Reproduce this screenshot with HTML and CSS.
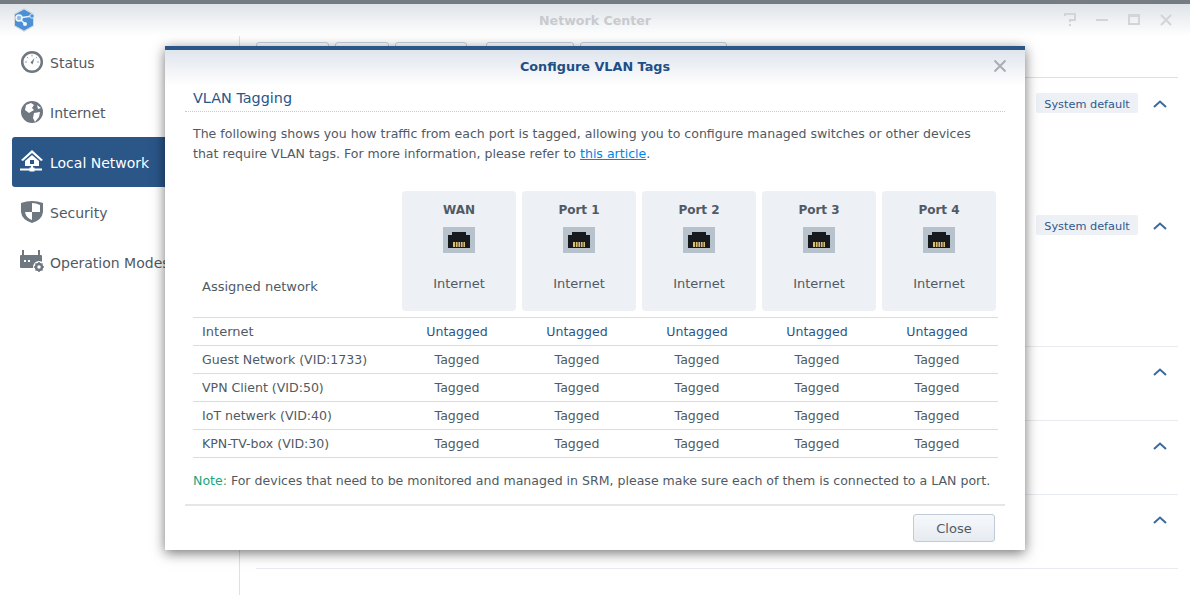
FILE: index.html
```html
<!DOCTYPE html>
<html lang="en">
<head>
<meta charset="utf-8">
<title>Network Center</title>
<link rel="stylesheet" href="styles.css">
</head>
<body>
<div class="app">
  <header class="titlebar">
    <svg class="app-logo" width="24" height="26" viewBox="0 0 24 26">
      <path d="M12 1 22 6.500V19L12 25 2 19V6.500Z" fill="#d5d9de"/>
      <path d="M12 2.500 21 7.500V18.500L12 23.500 3 18.500V7.500Z" fill="#4a90d6"/>
      <path d="M7 11 20 9M7 11 13 17" stroke="#e8f1fa" stroke-width="1.500" fill="none"/>
      <circle cx="7" cy="11" r="3" fill="#8fbde8" stroke="#f2f7fc" stroke-width="1.500"/>
      <circle cx="13" cy="17" r="2" fill="#f2f7fc"/>
      <circle cx="20" cy="9" r="2.200" fill="#4a90d6" stroke="#dbe9f7"/>
    </svg>
    <div class="window-title">Network Center</div>
    <div class="window-controls">
      <svg width="12" height="14" viewBox="0 0 12 14"><path d="M1 3V1H11V7H6V9M6 11V13" fill="none" stroke="#d2d4d7" stroke-width="2"/></svg>
      <svg width="12" height="14" viewBox="0 0 12 14"><path d="M0 7H12" stroke="#d2d4d7" stroke-width="2"/></svg>
      <svg width="12" height="14" viewBox="0 0 12 14"><rect x="1" y="2" width="10" height="9" fill="none" stroke="#d2d4d7" stroke-width="2"/><path d="M0 3H12" stroke="#d2d4d7" stroke-width="2"/></svg>
      <svg width="12" height="14" viewBox="0 0 12 14"><path d="M1 2 11 12M11 2 1 12" stroke="#d2d4d7" stroke-width="2"/></svg>
    </div>
  </header>
  <div class="workspace">
    <nav class="sidebar">
      <a class="nav-item">
        <svg class="nav-icon" width="24" height="24" viewBox="0 0 24 24"><circle cx="12" cy="12" r="9.800" fill="none" stroke="#6f7780" stroke-width="2.500"/><path d="M14.500 8 10.500 12.500 12.500 14.500Z" fill="#6f7780"/><path d="M12 4.500V6.500M5 12H7M17 12H19M7 7 8.200 8.200M17 7 15.800 8.200" stroke="#9aa0a6"/></svg>
        <span>Status</span>
      </a>
      <a class="nav-item">
        <svg class="nav-icon" width="24" height="24" viewBox="0 0 24 24"><circle cx="12" cy="12" r="11" fill="#6f7780"/><path d="M6 5 11 3 14 5 12 8 14 10 9 13 5 10ZM14 13 20 12 19 17 15 22 13 18ZM17 5 21 8 18 9Z" fill="#fff"/></svg>
        <span>Internet</span>
      </a>
      <a class="nav-item nav-item-active">
        <svg class="nav-icon" width="24" height="24" viewBox="0 0 24 24"><path d="M1 10 12 0 23 10 21 11 12 3 3 11Z" fill="#fff"/><path d="M5 11 12 5 19 11V16H5Z" fill="#fff"/><rect x="10" y="10" width="4" height="4" fill="#2a5688"/><path d="M0 19.500H10M14 19.500H22M12 16V18" stroke="#fff" stroke-width="2"/><rect x="9.500" y="17.500" width="5" height="4" fill="#fff"/></svg>
        <span>Local Network</span>
      </a>
      <a class="nav-item">
        <svg class="nav-icon" width="24" height="24" viewBox="0 0 24 24"><path d="M1 3Q12 -1 23 3V12Q22 20 12 23 2 20 1 12Z" fill="#6f7780"/><path d="M12 3Q16 3 20 5V12H12ZM12 12H5Q6 18 12 20Z" fill="#fff"/></svg>
        <span>Security</span>
      </a>
      <a class="nav-item">
        <svg class="nav-icon" width="24" height="24" viewBox="0 0 24 24"><path d="M3 0V5M19 0V5" stroke="#6f7780" stroke-width="2"/><rect y="5" width="22" height="13" rx="1" fill="#6f7780"/><path d="M4 11H6M8 11H10" stroke="#fff" stroke-width="2"/><circle cx="19" cy="17" r="6" fill="#fff"/><circle cx="19" cy="17" r="3" fill="none" stroke="#6f7780" stroke-width="2.500"/><path d="M19 12V22M14 17H24M15.500 13.500 22.500 20.500M22.500 13.500 15.500 20.500" stroke="#6f7780" stroke-width="1.500" stroke-dasharray="2 6"/></svg>
        <span>Operation Modes</span>
      </a>
    </nav>
    <main class="content">
      <div class="tabs">
        <span class="tab tab-a"></span><span class="tab tab-b"></span><span class="tab tab-c"></span><span class="tab tab-d"></span><span class="tab tab-e"></span>
      </div>
      <section class="panel panel-tall">
        <span class="badge">System default</span>
        <svg class="chevron" width="14" height="8" viewBox="0 0 14 8"><path d="M1 7 7 1.500 13 7" fill="none" stroke="#3b6a9c" stroke-width="2"/></svg>
      </section>
      <section class="panel panel-taller">
        <span class="badge">System default</span>
        <svg class="chevron" width="14" height="8" viewBox="0 0 14 8"><path d="M1 7 7 1.500 13 7" fill="none" stroke="#3b6a9c" stroke-width="2"/></svg>
      </section>
      <section class="panel panel-short">
        <svg class="chevron" width="14" height="8" viewBox="0 0 14 8"><path d="M1 7 7 1.500 13 7" fill="none" stroke="#3b6a9c" stroke-width="2"/></svg>
      </section>
      <section class="panel panel-short">
        <svg class="chevron" width="14" height="8" viewBox="0 0 14 8"><path d="M1 7 7 1.500 13 7" fill="none" stroke="#3b6a9c" stroke-width="2"/></svg>
      </section>
      <section class="panel panel-short">
        <svg class="chevron" width="14" height="8" viewBox="0 0 14 8"><path d="M1 7 7 1.500 13 7" fill="none" stroke="#3b6a9c" stroke-width="2"/></svg>
      </section>
    </main>
  </div>
</div>

<div class="dialog">
  <div class="dialog-head">
    <h1 class="dialog-title">Configure VLAN Tags</h1>
    <svg class="dialog-close" width="14" height="14" viewBox="0 0 14 14"><path d="M1.500 1.500 12.500 12.500M12.500 1.500 1.500 12.500" stroke="#a9adb2" stroke-width="2"/></svg>
  </div>
  <div class="dialog-body">
    <h2 class="section-title">VLAN Tagging</h2>
    <p class="intro">The following shows you how traffic from each port is tagged, allowing you to configure managed switches or other devices that require VLAN tags. For more information, please refer to <a class="link">this article</a>.</p>
    <div class="vlan">
      <div class="vlan-head">
        <div class="assigned">Assigned network</div>
        <div class="port"><b>WAN</b><svg class="jack" width="32" height="26" viewBox="0 0 32 26"><use href="#rj45"/></svg><span>Internet</span></div>
        <div class="port"><b>Port 1</b><svg class="jack" width="32" height="26" viewBox="0 0 32 26"><use href="#rj45"/></svg><span>Internet</span></div>
        <div class="port"><b>Port 2</b><svg class="jack" width="32" height="26" viewBox="0 0 32 26"><use href="#rj45"/></svg><span>Internet</span></div>
        <div class="port"><b>Port 3</b><svg class="jack" width="32" height="26" viewBox="0 0 32 26"><use href="#rj45"/></svg><span>Internet</span></div>
        <div class="port"><b>Port 4</b><svg class="jack" width="32" height="26" viewBox="0 0 32 26"><use href="#rj45"/></svg><span>Internet</span></div>
      </div>
      <div class="row row-first"><div>Internet</div><div class="un">Untagged</div><div class="un">Untagged</div><div class="un">Untagged</div><div class="un">Untagged</div><div class="un">Untagged</div></div>
      <div class="row"><div>Guest Network (VID:1733)</div><div>Tagged</div><div>Tagged</div><div>Tagged</div><div>Tagged</div><div>Tagged</div></div>
      <div class="row"><div>VPN Client (VID:50)</div><div>Tagged</div><div>Tagged</div><div>Tagged</div><div>Tagged</div><div>Tagged</div></div>
      <div class="row"><div>IoT netwerk (VID:40)</div><div>Tagged</div><div>Tagged</div><div>Tagged</div><div>Tagged</div><div>Tagged</div></div>
      <div class="row"><div>KPN-TV-box (VID:30)</div><div>Tagged</div><div>Tagged</div><div>Tagged</div><div>Tagged</div><div>Tagged</div></div>
    </div>
    <p class="note"><span class="note-label">Note:</span> For devices that need to be monitored and managed in SRM, please make sure each of them is connected to a LAN port.</p>
  </div>
  <div class="dialog-foot"><button class="btn">Close</button></div>
</div>

<svg class="defs" width="0" height="0">
  <symbol id="rj45" viewBox="0 0 32 26">
    <rect width="32" height="26" fill="#b8c2cc"/>
    <path d="M5 8H9V5H23V8H27V21H5Z" fill="#16191d"/>
    <rect x="10" y="15" width="12" height="5" fill="#d8bd72"/>
    <path d="M12.500 15V20M15 15V20M17.500 15V20M20 15V20" stroke="#16191d" stroke-width=".8"/>
  </symbol>
</svg>
</body>
</html>
```
FILE: styles.css
```css
* { box-sizing: border-box; }
html, body { margin: 0; height: 100%; }
body {
  position: relative;
  overflow: hidden;
  background: #fff;
  font-family: "DejaVu Sans", sans-serif;
  font-size: 12.55px;
  color: #505a64;
}
.defs { position: absolute; }
.app { height: 595px; display: flex; flex-direction: column; border-top: 4px solid #767c84; }
.titlebar {
  height: 32px;
  flex: none;
  display: flex;
  align-items: center;
  position: relative;
  background: linear-gradient(#dfe3e8, #fff);
}
.app-logo { margin: 0 0 0 12px; }
.window-title {
  position: absolute; left: 0; right: 0; top: 9px;
  text-align: center;
  font-weight: bold;
  color: #c8cace;
  font-size: 12.6px;
  line-height: 15px;
}
.window-controls { margin-left: auto; margin-right: 18px; display: flex; gap: 20px; }
.workspace { flex: 1; display: flex; min-height: 0; }
.sidebar { width: 240px; flex: none; padding: 1px 0 0 12px; border-right: 1px solid #dde1e6; }
.nav-item {
  height: 50px;
  width: 228px;
  display: flex;
  align-items: center;
  padding-left: 8px;
  gap: 6px;
  font-size: 14px;
  color: #505a64;
  border-radius: 3px;
  white-space: nowrap;
}
.nav-item span { padding-top: 2px; }
.nav-item-active { background: #2a5688; color: #fff; }
.nav-icon { flex: none; }
.content { flex: 1; padding: 6px 12px 0 16px; min-width: 0; }
.tabs { height: 36px; display: flex; border-bottom: 1px solid #d9e0e8; }
.tab { height: 26px; border: 1px solid #c5d0dd; border-radius: 3px 3px 0 0; }
.tab-a { width: 73px; margin-right: 6px; }
.tab-b { width: 54px; margin-right: 6px; }
.tab-c { width: 72px; margin-right: 19px; }
.tab-d { width: 88px; margin-right: 6px; }
.tab-e { width: 147px; }
.panel { display: flex; align-items: flex-start; justify-content: flex-end; padding-right: 11px; border-bottom: 1px solid #e8ebef; }
.panel-tall { height: 122px; padding-top: 15px; border-bottom: 0; }
.panel-taller { height: 147px; padding-top: 15px; }
.panel-short { height: 74px; padding-top: 21px; }
.badge {
  height: 20px;
  width: 102px;
  margin-right: 15px;
  border-radius: 2px;
  background: #edf0f5;
  color: #2f5a8c;
  font-size: 11.3px;
  line-height: 23px;
  text-align: center;
}
.chevron { margin-top: 7px; }
.panel-short .chevron { margin-top: 0; }

.dialog {
  position: absolute;
  left: 165px; top: 46px;
  width: 860px; height: 504px;
  background: #fff;
  border-top: 4px solid #2a5688;
  box-shadow: 0 3px 12px rgba(0,0,0,.55);
  display: flex;
  flex-direction: column;
}
.dialog-head {
  height: 36px;
  flex: none;
  position: relative;
  background: linear-gradient(#dfe5ed, #fff);
}
.dialog-title {
  margin: 0;
  padding-top: 9px;
  text-align: center;
  font-size: 12.8px;
  line-height: 15px;
  font-weight: bold;
  color: #1f4e86;
}
.dialog-close { position: absolute; right: 18px; top: 9px; }
.dialog-body { flex: 1; padding: 0 20px; }
.section-title {
  margin: 0;
  height: 26px;
  padding-left: 8px;
  padding-top: 4px;
  font-size: 14.4px;
  line-height: 17px;
  font-weight: normal;
  color: #2a5688;
  border-bottom: 1px dotted #c8cbcf;
}
.intro { margin: 12px 0 0 8px; line-height: 20px; width: 800px; }
.link { color: #0086e5; text-decoration: underline; }
.vlan { margin: 27px 0 0 8px; width: 805px; }
.vlan-head { display: flex; gap: 6px; height: 127px; border-bottom: 1px solid #d9dde2; }
.assigned { width: 203px; flex: none; padding: 0 0 23px 9px; align-self: flex-end; line-height: 15px; font-size: 13px; }
.port {
  width: 114px;
  height: 120px;
  flex: none;
  background: #edf0f5;
  border-radius: 4px;
  display: flex;
  flex-direction: column;
  align-items: center;
  padding-top: 12px;
  line-height: 15px;
  font-size: 13px;
}
.port b { font-size: 12px; }
.jack { margin-top: 9px; }
.port span { margin-top: 23px; }
.row {
  display: grid;
  grid-template-columns: 195px repeat(5, 120px);
  height: 28px;
  align-items: center;
  border-bottom: 1px solid #d9dde2;
  padding-left: 9px;
}
.row > div:not(:first-child) { text-align: center; }
.row-first > div:first-child { font-size: 13px; }
.un { color: #2a5688; }
.note { margin: 15px 0 0 0; padding-left: 8px; line-height: 15px; white-space: nowrap; }
.note-label { color: #19a67c; }
.dialog-foot {
  margin: 0 20px;
  height: 46px;
  flex: none;
  border-top: 2px solid #e4e6e9;
  display: flex;
  justify-content: flex-end;
  align-items: flex-start;
  padding: 8px 10px 0 0;
}
.btn {
  width: 82px;
  height: 28px;
  font: 13px "DejaVu Sans", sans-serif;
  color: #505a64;
  border: 1px solid #bfcbd8;
  border-radius: 3px;
  background: linear-gradient(#f6f8fb, #e6ebf1);
}
```
